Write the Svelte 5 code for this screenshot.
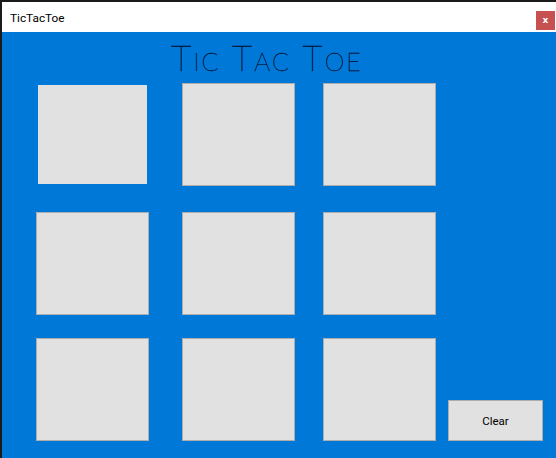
<script>
  let rows = [
    [0, 1, 2],
    [3, 4, 5],
    [6, 7, 8]
  ];
</script>

<div class="window">
  <header class="titlebar">
    <span class="caption">TicTacToe</span>
    <button class="close">x</button>
  </header>
  <main class="client">
    <h1 class="heading">Tic Tac Toe</h1>
    <div class="board">
      {#each rows as row}
        <div class="row">
          {#each row as cell}
            <button class="cell" class:focused={cell == 0}></button>
          {/each}
          {#if row[0] == 6}
            <button class="clear">Clear</button>
          {/if}
        </div>
      {/each}
    </div>
  </main>
</div>

<style>
  :global(body) {
    background: #0078d7;
  }

  .window {
    width: 556px;
    height: 458px;
    box-sizing: border-box;
    border-top: 2px solid #1a1a1a;
    border-left: 2px solid #1a1a1a;
    display: flex;
    flex-direction: column;
    overflow: hidden;
  }

  .titlebar {
    height: 30px;
    flex: none;
    background: #fff;
    display: flex;
    align-items: center;
    justify-content: space-between;
    padding: 0 1px 0 8px;
  }

  .caption {
    margin-top: 1px;
    font-family: Roboto, sans-serif;
    font-size: 11.8px;
    color: #000;
  }

  .close {
    width: 19px;
    height: 19px;
    margin-top: 7px;
    padding: 0 0 2px;
    border: none;
    background: #c75050;
    color: #fff;
    font-family: "DejaVu Sans", sans-serif;
    font-size: 9px;
    font-weight: bold;
  }

  .client {
    flex: 1;
    background: #0078d7;
  }

  .heading {
    margin: 0;
    height: 51px;
    padding-left: 169px;
    box-sizing: border-box;
    font-family: Lato, sans-serif;
    font-weight: 100;
    font-variant: small-caps;
    font-size: 36px;
    line-height: 51px;
    letter-spacing: 2px;
    color: #000a24;
    -webkit-text-stroke: 0.35px #000a24;
    white-space: nowrap;
  }

  .board {
    margin-left: 34px;
    display: flex;
    flex-direction: column;
  }

  .row {
    display: flex;
    height: 103px;
  }

  .row:nth-child(2) {
    margin-top: 26px;
  }

  .row:nth-child(3) {
    margin-top: 23px;
  }

  .cell,
  .clear {
    flex: none;
    margin: 0;
    padding: 0;
    box-sizing: border-box;
    background: #e1e1e1;
    border: 1px solid #adadad;
  }

  .cell {
    width: 113px;
    height: 103px;
  }

  .cell:nth-child(2) {
    margin-left: 33px;
  }

  .cell:nth-child(3) {
    margin-left: 28px;
  }

  .cell.focused {
    width: 109px;
    height: 99px;
    margin: 2px;
    border: none;
  }

  .clear {
    align-self: flex-end;
    width: 95px;
    height: 41px;
    margin-left: 12px;
    font-family: Roboto, sans-serif;
    font-size: 11.5px;
    color: #000;
  }
</style>
